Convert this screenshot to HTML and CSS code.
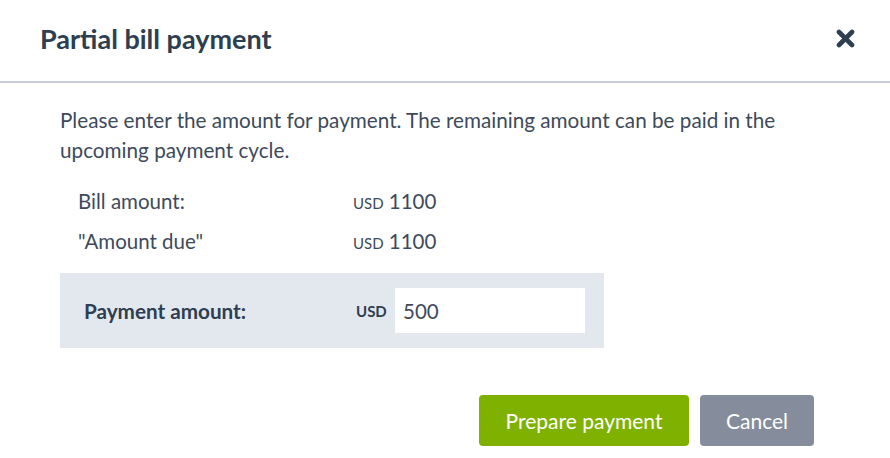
FILE: index.html
```html
<!DOCTYPE html>
<html lang="en">
<head>
<meta charset="utf-8">
<title>Partial bill payment</title>
<link rel="stylesheet" href="styles.css">
</head>
<body>
<div class="dialog">
  <div class="header">
    <h1 class="title">Partial bill payment</h1>
    <button class="close" aria-label="Close">
      <svg width="19" height="19" viewBox="0 0 19 19"><path d="M3 3 L16 16 M16 3 L3 16" stroke="#2e3f52" stroke-width="4.6" stroke-linecap="round" fill="none"/></svg>
    </button>
  </div>
  <div class="content">
    <p class="intro">Please enter the amount for payment. The remaining amount can be paid in the upcoming payment cycle.</p>
    <div class="rows">
      <div class="row"><span class="label">Bill amount:</span><span class="value"><span class="cur">USD</span> 1100</span></div>
      <div class="row"><span class="label">"Amount due"</span><span class="value"><span class="cur">USD</span> 1100</span></div>
    </div>
    <div class="pay-box">
      <span class="pay-label">Payment amount:</span>
      <span class="pay-cur">USD</span>
      <input class="pay-input" type="text" value="500">
    </div>
  </div>
  <div class="footer">
    <button class="btn btn-primary">Prepare payment</button>
    <button class="btn btn-secondary">Cancel</button>
  </div>
</div>
</body>
</html>
```

FILE: styles.css
```css
* { box-sizing: border-box; }
html, body { margin: 0; padding: 0; background: #ffffff; }
body { font-family: Lato, "Open Sans", sans-serif; color: #3d4a5c; }

.dialog { width: 890px; }

.header {
  height: 83px;
  display: flex;
  align-items: center;
  justify-content: space-between;
  padding: 0 35px 4px 40px;
  border-bottom: 2px solid #c8ccd7;
}
.title {
  margin: 0;
  font-size: 27px;
  font-weight: 700;
  color: #2d3e50;
}
.close {
  border: 0;
  background: none;
  padding: 0;
  width: 19px;
  height: 19px;
  display: flex;
}

.content { padding: 22px 0 0 60px; }
.intro {
  margin: 0;
  font-size: 20.7px;
  line-height: 30px;
  width: 740px;
}
.rows { margin-top: 16px; padding-left: 18px; }
.row {
  display: flex;
  height: 40px;
  line-height: 40px;
  font-size: 20.5px;
}
.label { width: 275px; }
.cur { font-size: 15px; }

.pay-box {
  margin-top: 12px;
  width: 544px;
  height: 75px;
  background: #e3e8ef;
  display: flex;
  align-items: center;
  padding-left: 24px;
}
.pay-label {
  width: 272px;
  font-size: 20.7px;
  font-weight: 700;
  color: #2f3e50;
}
.pay-cur {
  width: 39px;
  font-size: 15px;
  font-weight: 700;
  color: #2f3e50;
}
.pay-input {
  width: 190px;
  height: 45px;
  border: 0;
  outline: none;
  background: #ffffff;
  padding: 0 8px;
  font-family: Lato, "Open Sans", sans-serif;
  font-size: 20.5px;
  color: #3d4a5c;
}

.footer {
  display: flex;
  justify-content: flex-end;
  gap: 11px;
  padding: 47px 76px 0 0;
}
.btn {
  height: 51px;
  border: 0;
  border-radius: 4px;
  font-family: Lato, "Open Sans", sans-serif;
  font-size: 21px;
  color: #ffffff;
  padding: 0;
}
.btn-primary { background: #7fb200; width: 210px; }
.btn-secondary { background: #858d9d; width: 114px; }
```
